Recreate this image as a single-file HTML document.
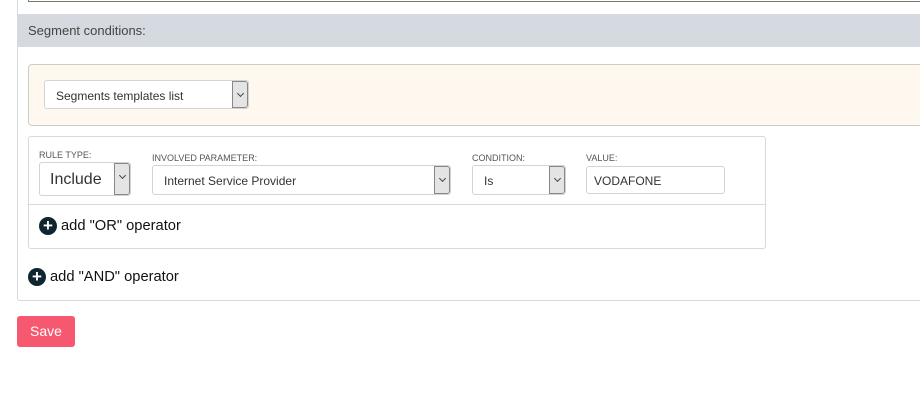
<!DOCTYPE html>
<html><head><style>
*{box-sizing:border-box;margin:0;padding:0}
body{width:920px;height:414px;background:#fff;font-family:"Liberation Sans",sans-serif;position:relative;overflow:hidden}
.a{position:absolute}
.lbl{font-size:9px;color:#555;text-transform:uppercase}
.sel{position:absolute;border:1px solid #d0d4d8;border-radius:3px;background:#fff;font-size:12px;color:#333}
.arr{position:absolute;right:0;top:0;bottom:0;width:16px;background:#e4e4e4;border:1px solid #888;border-radius:0 3px 3px 0}
.arr:after{content:"";position:absolute;left:5px;top:9px;width:4px;height:4px;border-right:1px solid #444;border-bottom:1px solid #444;transform:rotate(45deg)}
.plus{display:inline-block;width:18px;height:18px;border-radius:50%;background:#0f2530;color:#fff;text-align:center;font-weight:bold;font-size:17px;line-height:18px;vertical-align:middle;margin-right:4px}
.add{position:absolute;font-size:14.7px;color:#111}
</style></head><body>
<div class="a" style="left:17px;top:0;width:903px;height:301px;border-left:1px solid #d5d9e0;border-bottom:1px solid #d5d9e0;border-bottom-left-radius:3px"></div>
<div class="a" style="left:28px;top:-10px;width:900px;height:12px;border:1px solid #777"></div>
<div class="a" style="left:18px;top:14px;width:902px;height:33px;background:#d5d9e0;font-size:13px;color:#444;padding:9px 0 0 10px">Segment conditions:</div>
<div class="a" style="left:28px;top:64px;width:900px;height:62px;background:#fef8ee;border:1px solid #ccc;border-radius:4px"></div>
<div class="sel" style="left:44px;top:80px;width:205px;height:29px;padding:8px 0 0 11px">Segments templates list<div class="arr"></div></div>
<div class="a" style="left:28px;top:136px;width:738px;height:113px;border:1px solid #d5d9e0;border-radius:3px"></div>
<div class="a" style="left:29px;top:204px;width:736px;height:1px;background:#d5d9e0"></div>
<div class="a lbl" style="left:39px;top:150px">Rule type:</div>
<div class="a lbl" style="left:152px;top:153px">Involved parameter:</div>
<div class="a lbl" style="left:472px;top:153px">Condition:</div>
<div class="a lbl" style="left:586px;top:153px">Value:</div>
<div class="sel" style="left:39px;top:162px;width:92px;height:34px;padding:8px 0 0 10px;font-size:16px">Include<div class="arr" style="width:16px"></div></div>
<div class="sel" style="left:152px;top:165px;width:299px;height:30px;padding:8px 0 0 11px">Internet Service Provider<div class="arr"></div></div>
<div class="sel" style="left:472px;top:165px;width:94px;height:30px;padding:8px 0 0 11px">Is<div class="arr"></div></div>
<div class="sel" style="left:586px;top:166px;width:139px;height:28px;padding:7px 0 0 7px">VODAFONE</div>
<div class="add" style="left:39px;top:217px"><span class="plus">+</span>add "OR" operator</div>
<div class="add" style="left:28px;top:268px"><span class="plus">+</span>add "AND" operator</div>
<div class="a" style="left:17px;top:316px;width:58px;height:31px;background:#f5586f;border-radius:3px;color:#fff;font-size:14px;text-align:center;line-height:31px">Save</div>
</body></html>
